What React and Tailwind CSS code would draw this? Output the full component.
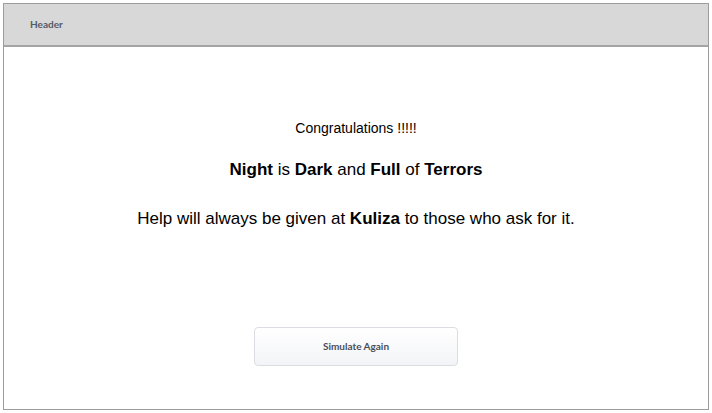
import React from 'react';

const App = () => {
  return (
    <div className="w-[712px] h-[413px] bg-white p-[3px]" style={{ fontFamily: '"Liberation Sans", Arial, sans-serif' }}>
      <div className="h-full flex flex-col border border-[#9d9d9d]">
        <header className="h-[43px] shrink-0 bg-[#d8d8d8] border-b-2 border-[#a4a4a4] flex items-center px-[26px]">
          <span className="text-[10px] font-bold text-[#545a66]" style={{ fontFamily: 'Lato, sans-serif' }}>Header</span>
        </header>

        <main className="flex-1 flex flex-col items-center text-black">
          <p className="mt-[73px] text-[14px] leading-[16px]">Congratulations !!!!!</p>
          <p className="mt-[24px] text-[17px] leading-[20px]">
            <b>Night</b> is <b>Dark</b> and <b>Full</b> of <b>Terrors</b>
          </p>
          <p className="mt-[29px] text-[17px] leading-[20px]">
            Help will always be given at <b>Kuliza</b> to those who ask for it.
          </p>

          <button className="mt-[98px] w-[204px] h-[39px] rounded-[4px] border border-[#dcdde2] bg-gradient-to-b from-white to-[#f3f4f7] text-[10px] font-bold text-[#4b4e59]" style={{ fontFamily: 'Lato, sans-serif' }}>
            Simulate Again
          </button>
        </main>
      </div>
    </div>
  );
};

export default App;
